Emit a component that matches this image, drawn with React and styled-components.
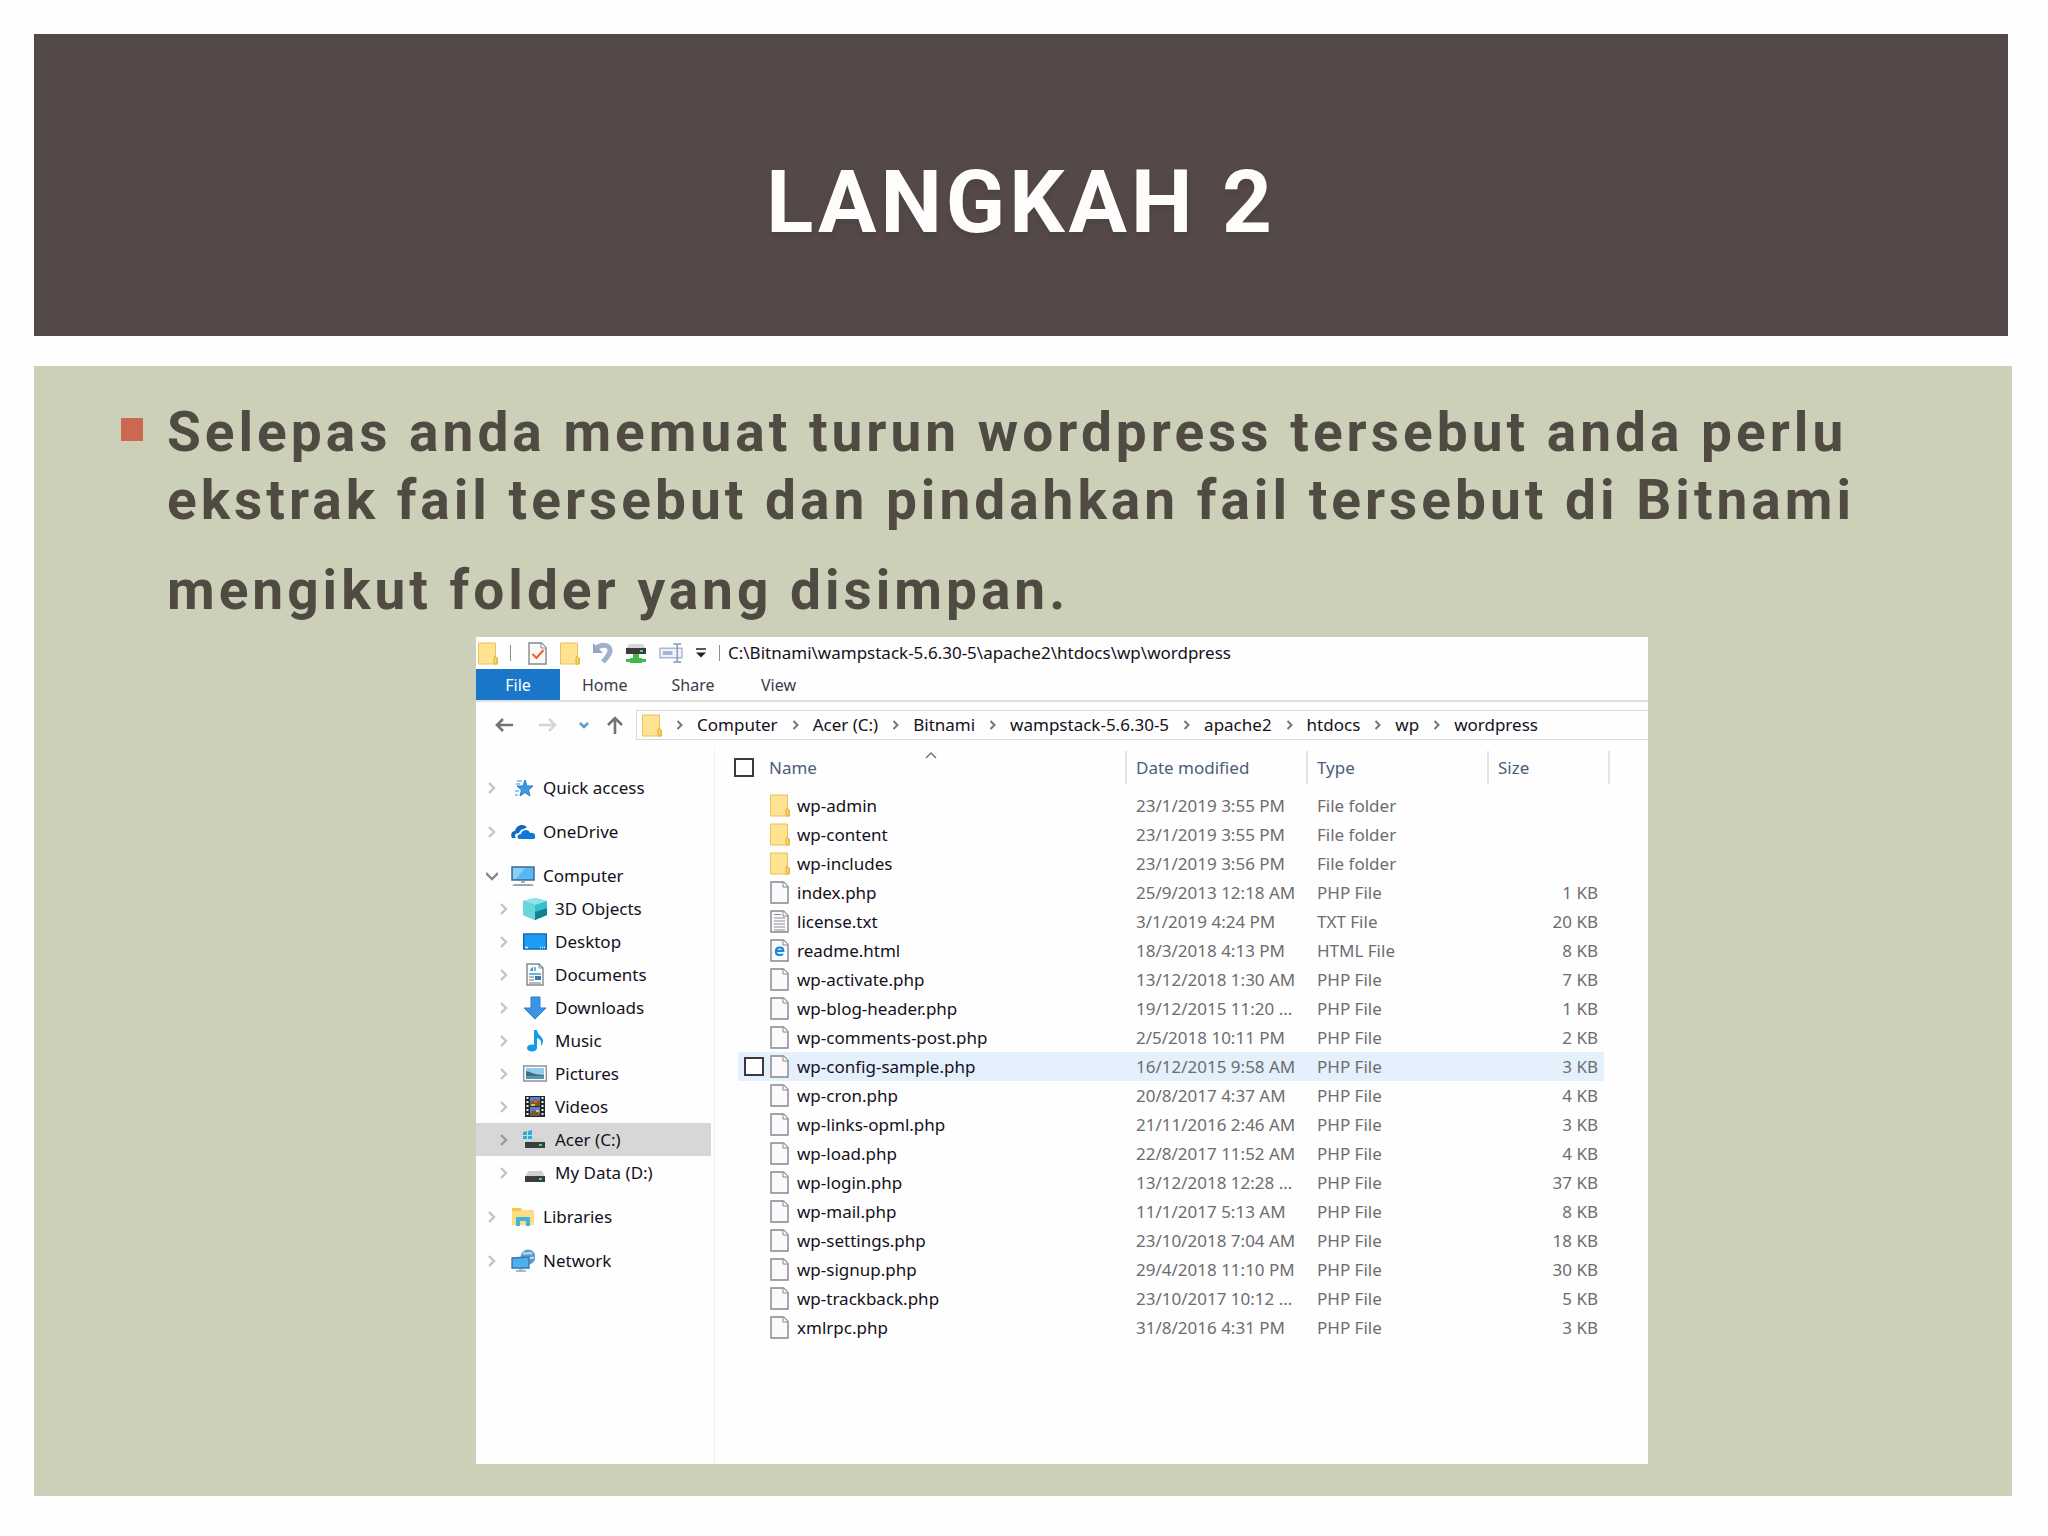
import React, { Fragment } from 'react';
import styled, { createGlobalStyle } from 'styled-components';

const GlobalStyle = createGlobalStyle`
  * {
    box-sizing: border-box;
  }

  body {
    background-color: #fefefe;
    margin: 0;
  }

  button {
    background: none;
    border: 0;
    color: inherit;
    font: inherit;
    padding: 0;
  }

  svg {
    display: block;
    flex: none;
  }
`;

/* Slide */

const Slide = styled.div`
  display: flex;
  flex-direction: column;
  font-family: Roboto, "Liberation Sans", Arial, sans-serif;
  gap: 30px;
  min-height: 100vh;
  padding: 34px 36px 40px 34px;
`;

const Banner = styled.header`
  background-color: #554849;
  margin-right: 4px;
  padding: 118px 40px 84px;
  text-align: center;
`;

const Title = styled.h1`
  color: #fffdfc;
  font-size: 87px;
  font-weight: bold;
  letter-spacing: 4px;
  line-height: 100px;
  margin: 0;
  text-shadow: 0 4px 4px rgba(60, 60, 60, .4);
`;

const Content = styled.main`
  background-color: #cdd0b9;
  display: flex;
  flex: 1;
  flex-direction: column;
  padding: 32px 87px 32px;
`;

const Bullets = styled.ul`
  color: #4f4a42;
  font-size: 55px;
  font-weight: bold;
  letter-spacing: 4px;
  list-style: none;
  margin: 0;
  padding: 0;
`;

const Bullet = styled.li`
  display: flex;
  gap: 24px;

  &::before {
    background-color: #cb6850;
    content: "";
    flex: none;
    height: 23px;
    margin-top: 20px;
    width: 22px;
  }
`;

const TextLine = styled.span`
  display: block;
  line-height: ${props => (props.$tall ? 112 : 68)}px;
  white-space: nowrap;
`;

/* Explorer window */

const Explorer = styled.section`
  background-color: #fefefe;
  color: #15101c;
  display: flex;
  flex: 1;
  flex-direction: column;
  font-family: "Noto Sans", "Segoe UI", sans-serif;
  font-size: 17px;
  line-height: 24px;
  margin: -9px 277px 0 355px;
`;

const TitleBar = styled.div`
  align-items: center;
  display: flex;
  height: 32px;
  padding-left: 2px;
`;

const Tools = styled.div`
  align-items: center;
  display: flex;
  gap: 12px;
`;

const Divider = styled.span`
  background-color: #8d8d8d;
  height: 16px;
  margin: 0 ${props => props.$gap}px 0 12px;
  width: 1px;
`;

const Ribbon = styled.div`
  border-bottom: 2px solid #dfdfdf;
  display: flex;
  font-size: 16px;
  height: 33px;
`;

const Tab = styled.button`
  background-color: ${props => (props.$active ? '#1976c8' : 'transparent')};
  color: ${props => (props.$active ? '#fff' : '#3c3a48')};
  min-width: 84px;
  padding: 0 22px;
`;

const NavBar = styled.div`
  align-items: center;
  display: flex;
  height: 46px;
`;

const NavButtons = styled.div`
  align-items: center;
  display: flex;
  gap: 16px;
  padding: 0 12px 0 14px;
`;

const Address = styled.nav`
  align-items: center;
  border: 1px solid #d9d9de;
  border-right: 0;
  display: flex;
  flex: 1;
  gap: 14px;
  height: 30px;
  padding-left: 5px;
`;

const Panes = styled.div`
  display: flex;
  flex: 1;
`;

const Tree = styled.nav`
  border-right: 1px solid #f1f1f5;
  display: flex;
  flex: none;
  flex-direction: column;
  gap: 11px;
  padding: 23px 3px 0 0;
  width: 239px;
`;

const TreeItem = styled.a`
  align-items: center;
  background-color: ${props => (props.$selected ? '#d8d7d8' : 'transparent')};
  color: inherit;
  display: flex;
  height: 33px;
  padding-left: ${props => (props.$child ? 22 : 10)}px;
  text-decoration: none;
`;

const TreeIcon = styled.span`
  margin: 0 8px 0 13px;
`;

const FilePane = styled.div`
  flex: 1;
  padding-top: 3px;
`;

const Files = styled.table`
  border-spacing: 0;
  table-layout: fixed;
  width: 100%;

  td {
    color: #6e6c70;
    height: 29px;
    padding: 0 0 0 9px;
    white-space: nowrap;
  }

  thead::after {
    content: "";
    display: block;
    height: 7px;
  }
`;

const Heading = styled.th`
  border-right: ${props => (props.$plain ? '0' : '2px solid #e4e4e8')};
  color: #4c5c7c;
  font-weight: normal;
  height: 33px;
  padding: 0 0 0 ${props => props.$pad || 9}px;
  position: relative;
  text-align: left;
`;

const SortMark = styled.span`
  left: 44%;
  position: absolute;
  top: 0;
`;

const FileRow = styled.tr`
  td:not(:first-child):not(:nth-last-child(-n + 2)) {
    background-color: ${props => (props.$hovered ? '#e4f1fc' : 'transparent')};
  }
`;

const CheckCell = styled.td`
  && {
    padding-left: 6px;
  }
`;

const FileName = styled.div`
  align-items: center;
  color: #15101c;
  display: flex;
  gap: 7px;
  margin-left: -7px;
`;

const SizeCell = styled.td`
  && {
    padding-right: 6px;
    text-align: right;
  }
`;

const CheckBox = styled.input`
  appearance: none;
  background-color: #fff;
  border: 2px solid #3a3840;
  display: block;
  height: 19px;
  margin: 0;
  width: 20px;
`;

/* Icons */

const FolderIcon = () => (
  <svg width="20" height="23" viewBox="0 0 20 23">
    <path d="M.5 1h17v14l2 1v6H.5z" fill="#ffe391" stroke="#e8c25a" />
    <path d="M16 22v-6l1-2 2 2v6z" fill="#fbd768" stroke="#dfae3b" />
  </svg>
);

const PageIcon = ({ kind }) => (
  <svg width="20" height="23" viewBox="0 0 20 23">
    <path d="M1 1h12.500l4.500 4.500V22H1z" fill="#faf9fb" stroke="#87858a" strokeWidth="1.400" />
    <path d="M13 1v5h5" fill="#fff" stroke="#87858a" />
    {kind === 'text' && (
      <path d="M4 4.500h7M4 8h11M4 11h11M4 14h11M4 17h11M4 20h11" stroke="#8f8e92" />
    )}
    {kind === 'html' && (
      <path
        d="M6 11.800h7.300c0-2-1.500-3.300-3.500-3.300-2.300 0-3.900 1.600-3.900 3.900s1.700 3.600 3.900 3.600c1.200 0 2.300-.3 3.200-.9"
        fill="none"
        stroke="#1b87dc"
        strokeWidth="2.200"
      />
    )}
    {kind === 'check' && (
      <path d="M4.500 12l4 4 7-8" fill="none" stroke="#ee6328" strokeWidth="2.200" />
    )}
  </svg>
);

const UndoIcon = () => (
  <svg width="21" height="22" viewBox="0 0 21 22">
    <path d="M1 1v10h10z" fill="#93a5c2" />
    <path d="M4 7c4-5 13-5 14 1 .5 4-3 7-7 12" fill="none" stroke="#9fb0ca" strokeWidth="5" />
  </svg>
);

const NetDriveIcon = () => (
  <svg width="22" height="20" viewBox="0 0 22 20">
    <path d="M4 1h14l3 5H1z" fill="#d5d5d5" />
    <path d="M1 5h20v6H1z" fill="#3b3b3d" />
    <path d="M15 7h3v2h-3z" fill="#3fe25a" />
    <path d="M8 11h6v4h3v1h4v3h-4v1H5v-1H1v-3h4v-1h3z" fill="#43b649" />
  </svg>
);

const RenameIcon = () => (
  <svg width="24" height="22" viewBox="0 0 25 22">
    <path d="M1 6h23v10H1z" fill="#eef2fa" stroke="#a9b8d2" strokeWidth="1.500" />
    <path d="M4 9h10v4H4z" fill="#a3b4d2" />
    <path d="M15 1.500c3 0 4 0 4 2v15c0 2-1 2-4 2M23 1.500c-3 0-4 0-4 2v15c0 2 1 2 4 2" fill="none" stroke="#8fa0bd" strokeWidth="1.700" />
  </svg>
);

const MenuIcon = () => (
  <svg width="12" height="10" viewBox="0 0 12 10">
    <path d="M1 1h10" stroke="#222" strokeWidth="1.500" />
    <path d="M1 4.500h10L6 9.500z" fill="#222" />
  </svg>
);

const ArrowIcon = ({ d, color, width = 18 }) => (
  <svg width={width} height="18" viewBox={`0 0 ${width} 18`}>
    <path d={d} fill="none" stroke={color} strokeWidth="2.600" />
  </svg>
);

const Chevron = ({ open, color = '#c4c3c6' }) => (
  <svg width="12" height="14" viewBox="0 0 12 14">
    <path
      d={open ? 'M0 4l6 6 6-6' : 'M3 2l5 5-5 5'}
      fill="none"
      stroke={open ? '#88878a' : color}
      strokeWidth="2.400"
    />
  </svg>
);

const CrumbMark = () => (
  <svg width="7" height="10" viewBox="0 0 7 10">
    <path d="M1.500 1l4 4-4 4" fill="none" stroke="#77757a" strokeWidth="2" />
  </svg>
);

const drawings = {
  star: (
    <>
      <path d="M14 4l2 6h6l-4.500 4 1.500 6-5-3.500L9 20l1.500-6L6 10h6z" fill="#3d9be3" stroke="#1c7fd0" />
      <path d="M6 5h5M5 8h4M4 15h4M4 19h3" stroke="#6db9ee" strokeWidth="1.500" />
    </>
  ),
  cloud: (
    <>
      <path d="M1 18c-2-4 0-7 3-7 1-6 8-8 12-4l-3 2c-3 0-4 2-5 4-4 0-5 3-3 5z" fill="#0f6cc4" />
      <path d="M8 19c-3-2-1-5 2-5 1-5 8-5 9-1 5-1 7 4 4 6z" fill="#0f78d8" />
    </>
  ),
  monitor: (
    <>
      <path d="M1 3h22v13H1z" fill="#58b7f5" stroke="#3d6c92" strokeWidth="1.500" />
      <path d="M2 4h12L5 15H2z" fill="#8bd0fa" />
      <path d="M10 17h4v2h-4z" fill="#a8b0b8" />
      <path d="M3 20h18l2 2H1z" fill="#9aaabb" />
    </>
  ),
  cube: (
    <>
      <path d="M12 1l12 3v14l-12 5L0 18V4z" fill="#35c0cf" />
      <path d="M0 4l12-3 12 3-12 4z" fill="#8fe3ea" />
      <path d="M0 4l12 4v15L0 18z" fill="#6bd5dc" />
      <path d="M12 15l12-4v7l-12 5z" fill="#12808f" />
    </>
  ),
  desktop: (
    <>
      <path d="M.700 4h22.600v15H.700z" fill="#1c9cf5" stroke="#1769ad" strokeWidth="1.400" />
      <path d="M2 17.500h3M17 17.500h1M19 17.500h1M21 17.500h1" stroke="#d8f0ff" strokeWidth="1.500" />
    </>
  ),
  document: (
    <>
      <path d="M4 1h12l4 4v17H4z" fill="#fff" stroke="#7f8890" strokeWidth="1.400" />
      <path d="M16 1v4h4" fill="none" stroke="#7f8890" />
      <path d="M7 8c1-3 2-4 3-4v4z" fill="#3b9add" />
      <path d="M12 4v4M6 11h12" stroke="#3b9add" strokeWidth="1.500" />
      <path d="M12 13h6v4h-6z" fill="#3b79b5" />
      <path d="M6 14h5M6 17h5M6 20h12" stroke="#6a7680" />
    </>
  ),
  download: <path d="M8 1h9v11h6L12 23 1 12h7z" fill="#3a96e4" stroke="#2a7fcd" />,
  music: (
    <>
      <path d="M11 1h3c0 5 6 6 6 11 0 2-1 4-2 5 1-5-1-7-4-8v10h-3z" fill="#109af0" />
      <ellipse cx="9" cy="19" rx="5" ry="3.500" fill="#109af0" />
    </>
  ),
  picture: (
    <>
      <path d="M.700 4h22.600v15H.700z" fill="#fff" stroke="#8b9197" strokeWidth="1.400" />
      <path d="M3 6h18v11H3z" fill="#92caf0" />
      <path d="M3 9c5 1 9 4 18 4v4H3z" fill="#3f6f7c" />
      <path d="M3 14h18v3H3z" fill="#5b94b0" />
    </>
  ),
  video: (
    <>
      <path d="M2 1h20v21H2z" fill="#25242a" />
      <path d="M7 2h10v9H7zM7 12h10v9H7z" fill="#5481d6" />
      <path d="M7 8l5-4 5 2v5H7zM7 18l4-3 6 4v2H7z" fill="#7b5a2a" />
      <path d="M11 5h3v3h-3z" fill="#e8562e" />
      <path d="M8 9h4v2H8zM13 15h3v2h-3z" fill="#e9c23f" />
      <path d="M4.500 2v20M19.500 2v20" stroke="#f2f2f2" strokeWidth="2" strokeDasharray="2 2" />
    </>
  ),
  systemDrive: (
    <>
      <path d="M0 4l4-1v4H0zM5 3l4-1v5H5zM0 8h4v3H0zM5 8h4v3H5z" fill="#27aee5" />
      <path d="M11 10h8l3 5H3l2-3h6z" fill="#cfd1d3" />
      <path d="M2 14h20v6H2z" fill="#3c3d40" />
      <path d="M16 16h3v2h-3z" fill="#3fe25a" />
    </>
  ),
  drive: (
    <>
      <path d="M5 10h14l3 6H2z" fill="#cfd1d3" />
      <path d="M2 15h20v6H2z" fill="#3c3d40" />
      <path d="M16 17h3v2h-3z" fill="#3fe25a" />
    </>
  ),
  libraries: (
    <>
      <path d="M1 3h9l2 2h11v15H1z" fill="#fbdd83" />
      <path d="M1 3h9v3H1z" fill="#f0c64c" />
      <path d="M5 12h14v9h-4v-5H9v5H5z" fill="#43b3dc" />
    </>
  ),
  network: (
    <>
      <circle cx="17" cy="8" r="7.500" fill="#5c9fc9" />
      <path d="M12 4c4 2 6-2 9 1M14 9c3-2 5 2 9-1" fill="none" stroke="#b9dcec" strokeWidth="2" />
      <path d="M1 9l17-1v11H1z" fill="#4fb0f0" stroke="#2e77ad" strokeWidth="1.300" />
      <path d="M8 20h4v1h3v2H5v-2h3z" fill="#a9b8c5" />
    </>
  ),
};

/* Data */

const lines = [
  'Selepas anda memuat turun wordpress tersebut anda perlu',
  'ekstrak fail tersebut dan pindahkan fail tersebut di Bitnami',
  'mengikut folder yang disimpan.',
];

const crumbs = ['Computer', 'Acer (C:)', 'Bitnami', 'wampstack-5.6.30-5', 'apache2', 'htdocs', 'wp', 'wordpress'];

const tree = [
  { name: 'Quick access', icon: 'star' },
  { name: 'OneDrive', icon: 'cloud' },
  {
    name: 'Computer',
    icon: 'monitor',
    children: [
      { name: '3D Objects', icon: 'cube' },
      { name: 'Desktop', icon: 'desktop' },
      { name: 'Documents', icon: 'document' },
      { name: 'Downloads', icon: 'download' },
      { name: 'Music', icon: 'music' },
      { name: 'Pictures', icon: 'picture' },
      { name: 'Videos', icon: 'video' },
      { name: 'Acer (C:)', icon: 'systemDrive', selected: true },
      { name: 'My Data (D:)', icon: 'drive' },
    ],
  },
  { name: 'Libraries', icon: 'libraries' },
  { name: 'Network', icon: 'network' },
];

const files = [
  ['wp-admin', '23/1/2019 3:55 PM', 'File folder', ''],
  ['wp-content', '23/1/2019 3:55 PM', 'File folder', ''],
  ['wp-includes', '23/1/2019 3:56 PM', 'File folder', ''],
  ['index.php', '25/9/2013 12:18 AM', 'PHP File', '1 KB'],
  ['license.txt', '3/1/2019 4:24 PM', 'TXT File', '20 KB'],
  ['readme.html', '18/3/2018 4:13 PM', 'HTML File', '8 KB'],
  ['wp-activate.php', '13/12/2018 1:30 AM', 'PHP File', '7 KB'],
  ['wp-blog-header.php', '19/12/2015 11:20 ...', 'PHP File', '1 KB'],
  ['wp-comments-post.php', '2/5/2018 10:11 PM', 'PHP File', '2 KB'],
  ['wp-config-sample.php', '16/12/2015 9:58 AM', 'PHP File', '3 KB'],
  ['wp-cron.php', '20/8/2017 4:37 AM', 'PHP File', '4 KB'],
  ['wp-links-opml.php', '21/11/2016 2:46 AM', 'PHP File', '3 KB'],
  ['wp-load.php', '22/8/2017 11:52 AM', 'PHP File', '4 KB'],
  ['wp-login.php', '13/12/2018 12:28 ...', 'PHP File', '37 KB'],
  ['wp-mail.php', '11/1/2017 5:13 AM', 'PHP File', '8 KB'],
  ['wp-settings.php', '23/10/2018 7:04 AM', 'PHP File', '18 KB'],
  ['wp-signup.php', '29/4/2018 11:10 PM', 'PHP File', '30 KB'],
  ['wp-trackback.php', '23/10/2017 10:12 ...', 'PHP File', '5 KB'],
  ['xmlrpc.php', '31/8/2016 4:31 PM', 'PHP File', '3 KB'],
];

const hoveredFile = 'wp-config-sample.php';

const pageKinds = { 'TXT File': 'text', 'HTML File': 'html' };

const TreeNode = ({ item, child }) => (
  <TreeItem href="#" $child={child} $selected={item.selected}>
    <Chevron open={Boolean(item.children)} color={item.selected ? '#9b9a9d' : undefined} />
    <TreeIcon>
      <svg width="24" height="24" viewBox="0 0 24 24">{drawings[item.icon]}</svg>
    </TreeIcon>
    {item.name}
  </TreeItem>
);

const FileTable = () => (
  <Files>
    <colgroup>
      <col width="23" />
      <col width="30" />
      <col />
      <col width="181" />
      <col width="181" />
      <col width="115" />
      <col width="6" />
      <col width="38" />
    </colgroup>
    <thead>
      <tr>
        <Heading colSpan="2" $plain $pad={19}>
          <CheckBox type="checkbox" aria-label="Select all" />
        </Heading>
        <Heading $pad={1}>
          Name
          <SortMark>
            <svg width="12" height="8" viewBox="0 0 12 8">
              <path d="M1 7l5-5 5 5" fill="none" stroke="#77757a" strokeWidth="1.500" />
            </svg>
          </SortMark>
        </Heading>
        <Heading>Date modified</Heading>
        <Heading>Type</Heading>
        <Heading colSpan="2">Size</Heading>
        <td />
      </tr>
    </thead>
    <tbody>
      {files.map(([name, date, type, size]) => (
        <FileRow key={name} $hovered={name === hoveredFile}>
          <td />
          <CheckCell>
            {name === hoveredFile && <CheckBox type="checkbox" aria-label={name} />}
          </CheckCell>
          <td>
            <FileName>
              {type === 'File folder' ? <FolderIcon /> : <PageIcon kind={pageKinds[type]} />}
              {name}
            </FileName>
          </td>
          <td>{date}</td>
          <td>{type}</td>
          <SizeCell>{size}</SizeCell>
          <td />
          <td />
        </FileRow>
      ))}
    </tbody>
  </Files>
);

const App = () => (
  <Slide>
    <GlobalStyle />
    <Banner>
      <Title>LANGKAH 2</Title>
    </Banner>
    <Content>
      <Bullets>
        <Bullet>
          <div>
            {lines.map((line, index) => (
              <TextLine key={line} $tall={index === 2}>{line}</TextLine>
            ))}
          </div>
        </Bullet>
      </Bullets>
      <Explorer>
        <TitleBar>
          <FolderIcon />
          <Divider $gap={17} />
          <Tools>
            <button aria-label="Properties"><PageIcon kind="check" /></button>
            <button aria-label="New folder"><FolderIcon /></button>
            <button aria-label="Undo"><UndoIcon /></button>
            <button aria-label="Map network drive"><NetDriveIcon /></button>
            <button aria-label="Rename"><RenameIcon /></button>
            <button aria-label="Customize toolbar"><MenuIcon /></button>
          </Tools>
          <Divider $gap={8} />
          {'C:\\Bitnami\\wampstack-5.6.30-5\\apache2\\htdocs\\wp\\wordpress'}
        </TitleBar>
        <Ribbon>
          <Tab $active>File</Tab>
          <Tab>Home</Tab>
          <Tab>Share</Tab>
          <Tab>View</Tab>
        </Ribbon>
        <NavBar>
          <NavButtons>
            <button aria-label="Back">
              <ArrowIcon d="M23 9H7M13 3L7 9l6 6" color="#737276" width={28} />
            </button>
            <button aria-label="Forward">
              <ArrowIcon d="M5 9h16M15 3l6 6-6 6" color="#d6d5d8" width={28} />
            </button>
            <button aria-label="Recent">
              <ArrowIcon d="M2 7l4 4 4-4" color="#5c9bd0" width={12} />
            </button>
            <button aria-label="Up">
              <ArrowIcon d="M9 18V2M2 9l7-7 7 7" color="#737276" />
            </button>
          </NavButtons>
          <Address aria-label="Address">
            <FolderIcon />
            {crumbs.map(crumb => (
              <Fragment key={crumb}>
                <CrumbMark />
                <button>{crumb}</button>
              </Fragment>
            ))}
          </Address>
        </NavBar>
        <Panes>
          <Tree aria-label="Folders">
            {tree.map(item => (
              <div key={item.name}>
                <TreeNode item={item} />
                {item.children && item.children.map(child => (
                  <TreeNode key={child.name} item={child} child />
                ))}
              </div>
            ))}
          </Tree>
          <FilePane>
            <FileTable />
          </FilePane>
        </Panes>
      </Explorer>
    </Content>
  </Slide>
);

export default App;
